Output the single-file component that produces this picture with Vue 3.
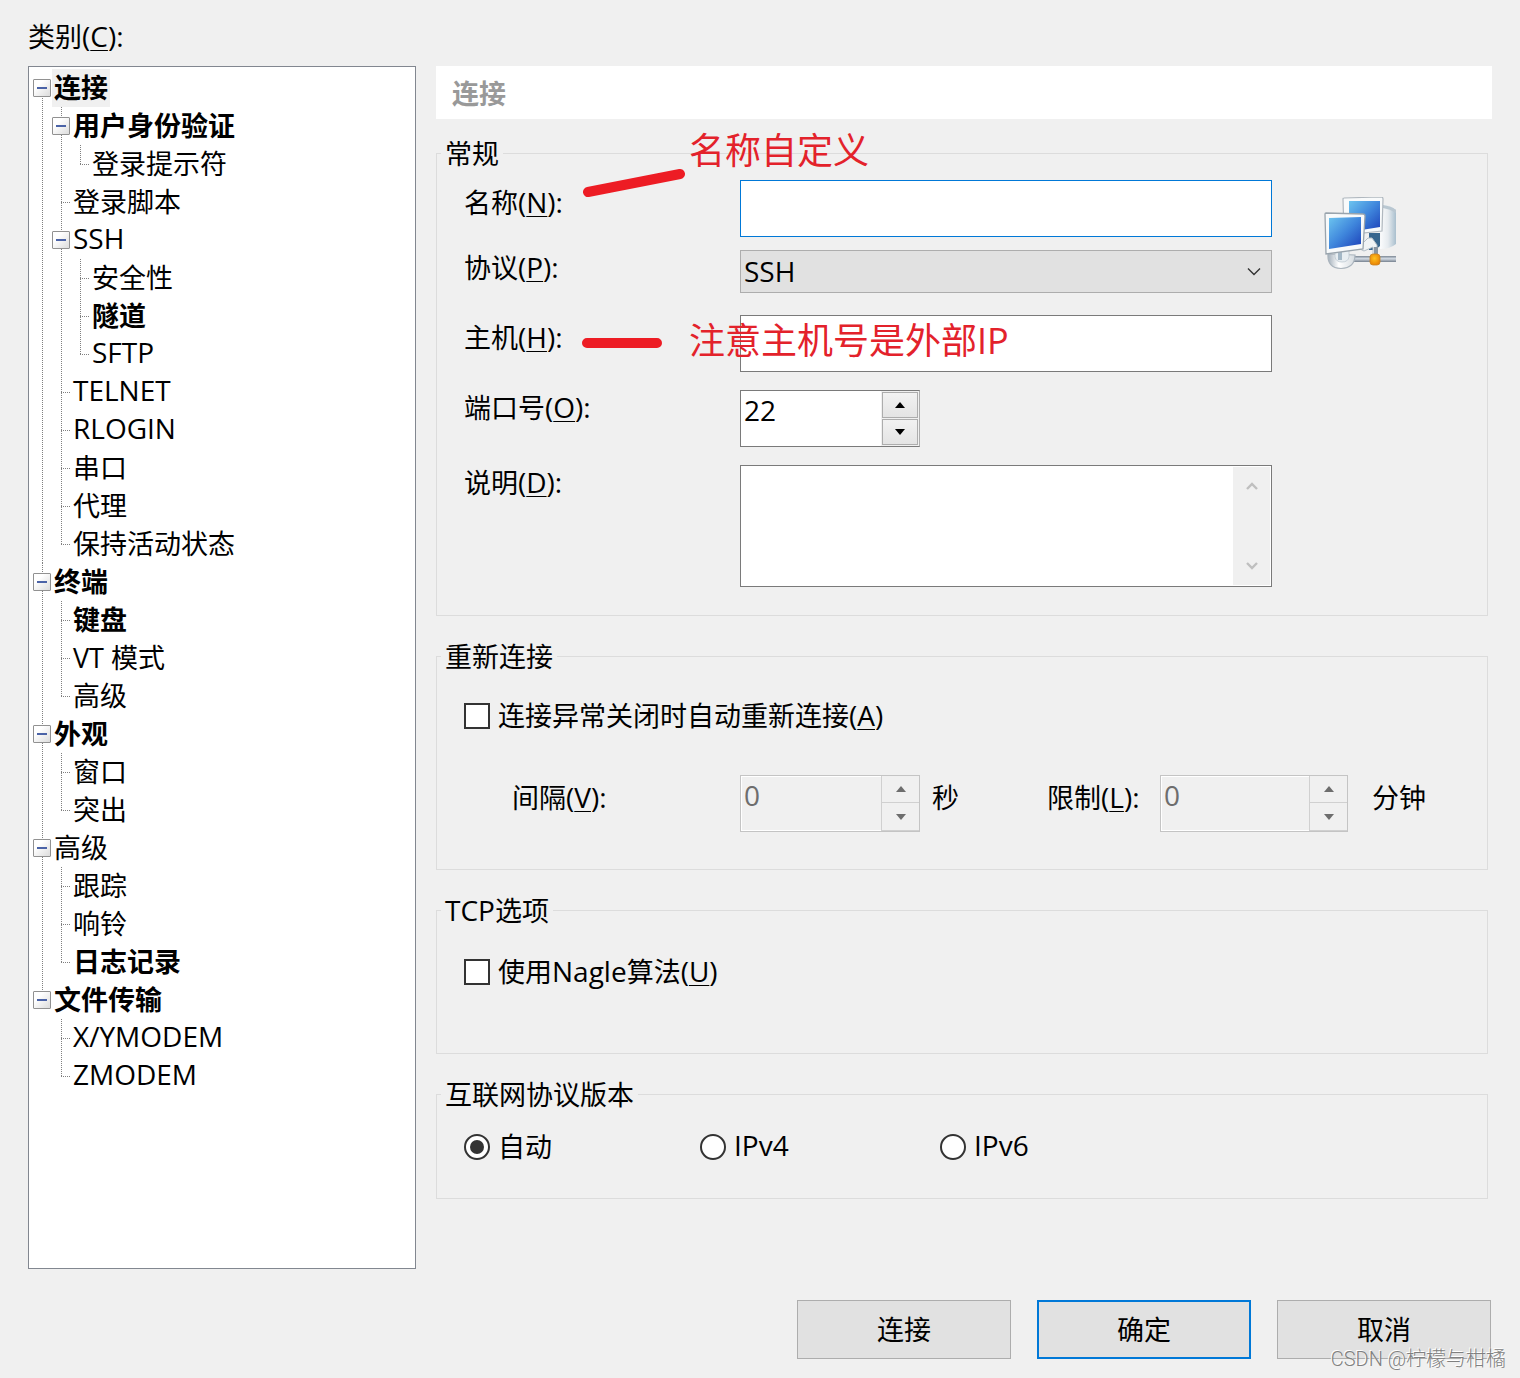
<script setup>
import { reactive, ref } from 'vue'

const tree = reactive([
  {
    name: '连接', bold: true, open: true, selected: true,
    children: [
      { name: '用户身份验证', bold: true, open: true, children: [{ name: '登录提示符' }] },
      { name: '登录脚本' },
      {
        name: 'SSH', latin: true, open: true,
        children: [{ name: '安全性' }, { name: '隧道', bold: true }, { name: 'SFTP', latin: true }],
      },
      { name: 'TELNET', latin: true },
      { name: 'RLOGIN', latin: true },
      { name: '串口' },
      { name: '代理' },
      { name: '保持活动状态' },
    ],
  },
  {
    name: '终端', bold: true, open: true,
    children: [{ name: '键盘', bold: true }, { name: 'VT 模式' }, { name: '高级' }],
  },
  { name: '外观', bold: true, open: true, children: [{ name: '窗口' }, { name: '突出' }] },
  {
    name: '高级', open: true,
    children: [{ name: '跟踪' }, { name: '响铃' }, { name: '日志记录', bold: true }],
  },
  {
    name: '文件传输', bold: true, open: true,
    children: [{ name: 'X/YMODEM', latin: true }, { name: 'ZMODEM', latin: true }],
  },
])

const hostName = ref('')
const protocol = ref('SSH')
const host = ref('')
const port = ref('22')
const description = ref('')
const reconnect = ref(false)
const interval = ref('0')
const limit = ref('0')
const nagle = ref(false)
const ipVersion = ref('auto')

function stepPort(delta) {
  port.value = String(Math.max(0, Number(port.value) + delta))
}
</script>

<template>
  <div class="dialog">
    <div id="category-label" class="category">类别<span class="key">(<u>C</u>):</span></div>

    <div class="main">
      <nav class="tree" aria-labelledby="category-label">
        <ul class="root">
          <li v-for="a in tree" :key="a.name">
            <div class="node">
              <button class="toggle" type="button" :aria-label="a.name" @click="a.open = !a.open"></button>
              <span class="name" :class="{ bold: a.bold, latin: a.latin, selected: a.selected }">{{ a.name }}</span>
            </div>
            <ul v-if="a.open">
              <li v-for="b in a.children" :key="b.name">
                <div class="node">
                  <button v-if="b.children" class="toggle" type="button" :aria-label="b.name" @click="b.open = !b.open"></button>
                  <span v-else class="stub"></span>
                  <span class="name" :class="{ bold: b.bold, latin: b.latin }">{{ b.name }}</span>
                </div>
                <ul v-if="b.open">
                  <li v-for="c in b.children" :key="c.name">
                    <div class="node">
                      <span class="stub"></span>
                      <span class="name" :class="{ bold: c.bold, latin: c.latin }">{{ c.name }}</span>
                    </div>
                  </li>
                </ul>
              </li>
            </ul>
          </li>
        </ul>
      </nav>

      <div class="panel">
        <h1 class="title">连接</h1>

        <div class="groups">
          <div class="annotated">
            <fieldset>
              <legend>常规</legend>
              <div class="general">
                <div class="form">
                  <div class="field">
                    <label class="low" for="name">名称<span class="key">(<u>N</u>):</span></label>
                    <input id="name" v-model="hostName" class="box focused" type="text" />
                  </div>
                  <div class="field protocol">
                    <label for="protocol">协议<span class="key">(<u>P</u>):</span></label>
                    <div class="combo">
                      <select id="protocol" v-model="protocol">
                        <option>SSH</option>
                        <option>SFTP</option>
                        <option>TELNET</option>
                        <option>RLOGIN</option>
                      </select>
                      <svg width="14" height="9" viewBox="0 0 14 9" aria-hidden="true">
                        <path d="M1 1.5 7 7.5 13 1.5" fill="none" stroke="#333" stroke-width="1.4" />
                      </svg>
                    </div>
                  </div>
                  <div class="field host">
                    <label class="low" for="host">主机<span class="key">(<u>H</u>):</span></label>
                    <input id="host" v-model="host" class="box" type="text" />
                  </div>
                  <div class="field">
                    <label for="port">端口号<span class="key">(<u>O</u>):</span></label>
                    <div class="spin">
                      <input id="port" v-model="port" type="text" />
                      <div class="arrows">
                        <button type="button" aria-label="+" @click="stepPort(1)">
                          <svg width="10" height="6" viewBox="0 0 10 6"><path d="M0 6 5 0 10 6z" /></svg>
                        </button>
                        <button type="button" aria-label="-" @click="stepPort(-1)">
                          <svg width="10" height="6" viewBox="0 0 10 6"><path d="M0 0 5 6 10 0z" /></svg>
                        </button>
                      </div>
                    </div>
                  </div>
                  <div class="field">
                    <label for="description">说明<span class="key">(<u>D</u>):</span></label>
                    <div class="memo">
                      <textarea id="description" v-model="description"></textarea>
                      <div class="scroll" aria-hidden="true">
                        <svg width="12" height="9" viewBox="0 0 12 9"><path d="M1 8 6 3 11 8" /></svg>
                        <svg width="12" height="9" viewBox="0 0 12 9"><path d="M1 1 6 6 11 1" /></svg>
                      </div>
                    </div>
                  </div>
                </div>

                <svg class="computers" width="74" height="74" viewBox="0 0 74 74" aria-hidden="true">
                  <defs>
                    <linearGradient id="screen" x1="0" y1="0" x2="1" y2="1">
                      <stop offset="0" stop-color="#6cc4ef" />
                      <stop offset="0.5" stop-color="#3f86dc" />
                      <stop offset="1" stop-color="#1b3fb8" />
                    </linearGradient>
                    <linearGradient id="tower" x1="0" y1="0" x2="1" y2="0">
                      <stop offset="0" stop-color="#fbfcfd" />
                      <stop offset="0.5" stop-color="#e6ebef" />
                      <stop offset="1" stop-color="#a9bfce" />
                    </linearGradient>
                    <linearGradient id="pipe" x1="0" y1="0" x2="0" y2="1">
                      <stop offset="0" stop-color="#7c8794" />
                      <stop offset="0.45" stop-color="#d3dbe4" />
                      <stop offset="1" stop-color="#76818f" />
                    </linearGradient>
                    <linearGradient id="base" x1="0" y1="0" x2="1" y2="0">
                      <stop offset="0" stop-color="#a3afba" />
                      <stop offset="0.4" stop-color="#fff" />
                      <stop offset="1" stop-color="#d5dbe0" />
                    </linearGradient>
                    <radialGradient id="joint" cx="0.45" cy="0.4" r="0.7">
                      <stop offset="0" stop-color="#ffc21f" />
                      <stop offset="1" stop-color="#e57a00" />
                    </radialGradient>
                  </defs>
                  <path d="M57 7Q66 8 72 13V47Q66 52 56 52z" fill="url(#tower)" />
                  <path d="M59 8Q67 9 72 13V16Q66 12 59 11z" fill="#b9c7d1" />
                  <path d="M45 36H56V49L51 53H45z" fill="#38668e" />
                  <path d="M34 51 44 41H48L53 48V59H49V50L40 54z" fill="#f0f3f5" stroke="#b4bec6" stroke-width="1" />
                  <path d="M19 2Q19 1 20 1L57 0Q59 0 59 2L58 34 20 38z" fill="#f8fafb" stroke="#b0b8bf" stroke-width="1.2" />
                  <path d="M25 4H56V30L25 35z" fill="url(#screen)" />
                  <path d="M28 59H72V65H28z" fill="url(#pipe)" />
                  <path d="M50 50H54V60H50z" fill="#8995a1" />
                  <path d="M4 57Q3 71 17 71.5 31 71 31 58z" fill="url(#base)" stroke="#aab4bd" stroke-width="1.2" />
                  <path d="M11 53H25V60Q24 65 18 65 12 65 11 60z" fill="#e8eef2" stroke="#bdc8d0" stroke-width="0.8" />
                  <path d="M14 53H18V63H14z" fill="#a3b7c6" />
                  <path d="M1 17Q1 16 2 16L39 17Q41 17 41 19L39 52 2 57z" fill="#f8fafb" stroke="#99a4ad" stroke-width="1.3" />
                  <path d="M5 21 37 20 37 47 5 52z" fill="url(#screen)" />
                  <rect x="46" y="57" width="10" height="11" rx="3" fill="url(#joint)" stroke="#c98422" stroke-width="0.8" />
                </svg>
              </div>
            </fieldset>

            <svg class="strokes" width="120" height="200" viewBox="0 0 120 200" aria-hidden="true">
              <path d="M12 22 104 4M11 173H81" fill="none" stroke="#ed1c24" stroke-width="10" stroke-linecap="round" />
            </svg>
            <span class="note note-name">名称自定义</span>
            <span class="note note-host">注意主机号是外部IP</span>
          </div>

          <fieldset>
            <legend>重新连接</legend>
            <div class="reconnect">
              <label class="choice">
                <input v-model="reconnect" type="checkbox" />
                <span>连接异常关闭时自动重新连接<span class="key">(<u>A</u>)</span></span>
              </label>
              <div class="timing">
                <label class="interval" for="interval">间隔<span class="key">(<u>V</u>):</span></label>
                <div class="spin off">
                  <input id="interval" v-model="interval" type="text" disabled />
                  <div class="arrows">
                    <button type="button" aria-label="+" disabled>
                      <svg width="10" height="6" viewBox="0 0 10 6"><path d="M0 6 5 0 10 6z" /></svg>
                    </button>
                    <button type="button" aria-label="-" disabled>
                      <svg width="10" height="6" viewBox="0 0 10 6"><path d="M0 0 5 6 10 0z" /></svg>
                    </button>
                  </div>
                </div>
                <span class="seconds">秒</span>
                <label class="limit" for="limit">限制<span class="key">(<u>L</u>):</span></label>
                <div class="spin off wide">
                  <input id="limit" v-model="limit" type="text" disabled />
                  <div class="arrows">
                    <button type="button" aria-label="+" disabled>
                      <svg width="10" height="6" viewBox="0 0 10 6"><path d="M0 6 5 0 10 6z" /></svg>
                    </button>
                    <button type="button" aria-label="-" disabled>
                      <svg width="10" height="6" viewBox="0 0 10 6"><path d="M0 0 5 6 10 0z" /></svg>
                    </button>
                  </div>
                </div>
                <span class="minutes">分钟</span>
              </div>
            </div>
          </fieldset>

          <fieldset>
            <legend><span class="key">TCP</span>选项</legend>
            <div class="tcp">
              <label class="choice">
                <input v-model="nagle" type="checkbox" />
                <span>使用<span class="key">Nagle</span>算法<span class="key">(<u>U</u>)</span></span>
              </label>
            </div>
          </fieldset>

          <fieldset>
            <legend>互联网协议版本</legend>
            <div class="versions">
              <label class="choice">
                <input v-model="ipVersion" type="radio" name="ip" value="auto" />
                <span>自动</span>
              </label>
              <label class="choice">
                <input v-model="ipVersion" type="radio" name="ip" value="4" />
                <span class="latin">IPv4</span>
              </label>
              <label class="choice">
                <input v-model="ipVersion" type="radio" name="ip" value="6" />
                <span class="latin">IPv6</span>
              </label>
            </div>
          </fieldset>
        </div>
      </div>
    </div>

    <div class="footer">
      <button type="button">连接</button>
      <button type="button" class="default">确定</button>
      <button type="button">取消</button>
    </div>

    <span class="watermark">CSDN @柠檬与柑橘</span>
  </div>
</template>

<style>
body {
  background: #f0f0f0;
}
</style>

<style scoped>
.dialog,
.dialog * {
  box-sizing: border-box;
}

.dialog {
  position: relative;
  padding: 18px 28px 19px;
  background: #f0f0f0;
  color: #000;
  font: 27px/38px "Open Sans", "Noto Sans CJK SC", sans-serif;
  white-space: nowrap;
}

input,
select,
textarea,
button {
  margin: 0;
  padding: 0;
  border: 0;
  border-radius: 0;
  outline: 0;
  color: inherit;
  font: inherit;
}

u {
  text-decoration-thickness: 1px;
  text-underline-offset: 3px;
}

.key,
.latin {
  font-size: 28px;
}

.key {
  line-height: 28px;
}

.category {
  margin-bottom: 10px;
}

.main {
  display: flex;
  gap: 20px;
}

/* category tree */
.tree {
  flex: none;
  width: 388px;
  padding: 2px 4px;
  border: 1px solid #828790;
  background: #fff;
}

.tree ul {
  margin: 0;
  padding: 0;
  list-style: none;
}

.tree ul ul {
  margin-left: 19px;
}

.tree li {
  background: repeating-linear-gradient(#808080 0 1px, transparent 1px 2px) 9px 0 / 1px 100% no-repeat;
}

.tree li:last-child {
  background-size: 1px 19px;
}

.root > li:first-child {
  background-position: 9px 19px;
}

.node {
  display: flex;
  align-items: center;
  height: 38px;
  background: repeating-linear-gradient(90deg, #808080 0 1px, transparent 1px 2px) 9px 19px / 10px 1px no-repeat;
}

.toggle {
  display: flex;
  align-items: center;
  justify-content: center;
  width: 18px;
  height: 18px;
  margin-right: 1px;
  border: 1px solid #919191;
  border-radius: 1px;
  background: linear-gradient(135deg, #fff 30%, #dcdcdc);
}

.toggle::before {
  content: "";
  width: 10px;
  height: 2px;
  background: #4b63a7;
}

.stub {
  width: 18px;
  margin-right: 1px;
}

.name {
  padding: 0 2px;
}

.latin {
  padding-bottom: 4px;
}

.bold {
  font-weight: 700;
}

.selected {
  background: #f0f0f0;
}

/* settings panel */
.panel {
  flex: 1;
  min-width: 0;
  padding-bottom: 70px;
}

.title {
  margin: 0 0 16px;
  padding: 9px 16px 6px;
  background: #fff;
  color: #999;
  font-size: 27px;
  font-weight: 700;
  line-height: 38px;
}

.groups {
  display: flex;
  flex-direction: column;
  gap: 22px;
  margin-right: 4px;
}

.annotated {
  position: relative;
}

fieldset {
  min-width: 0;
  margin: 0;
  padding: 0 0 0 4px;
  border: 1px solid #dcdcdc;
}

legend {
  height: 36px;
  padding: 0 4px;
}

.general {
  display: flex;
  align-items: flex-start;
  padding: 9px 0 28px 23px;
}

.form {
  display: flex;
  flex: 1;
  flex-direction: column;
  gap: 18px;
}

.field {
  display: flex;
  align-items: flex-start;
}

.field > label {
  flex: none;
  width: 276px;
  line-height: 36px;
}

.field > .low {
  padding-top: 5px;
}

.protocol {
  margin-top: -5px;
}

.host {
  margin-top: 4px;
}

.box {
  flex: 1;
  min-width: 0;
  height: 57px;
  padding: 0 4px;
  border: 1px solid #7a7a7a;
  background: #fff;
}

.focused {
  border-color: #0078d7;
}

.combo {
  position: relative;
  flex: 1;
}

.combo select {
  display: block;
  width: 100%;
  height: 43px;
  padding: 0 3px 2px;
  border: 1px solid #adadad;
  background: #e1e1e1;
  font-size: 28px;
  appearance: none;
}

.combo svg {
  position: absolute;
  top: 17px;
  right: 11px;
  pointer-events: none;
}

.spin {
  display: flex;
  flex: none;
  width: 180px;
  height: 57px;
  border: 1px solid #7a7a7a;
  border-right-color: #adadad;
  background: #fff;
}

.spin.wide {
  width: 188px;
}

.spin input {
  flex: 1;
  min-width: 0;
  padding: 0 3px 18px;
  background: #fff;
  font-size: 28px;
}

.arrows {
  display: flex;
  flex-direction: column;
  gap: 1px;
  width: 38px;
  padding: 1px;
  background: #f0f0f0;
}

.arrows button {
  display: flex;
  flex: 1;
  align-items: center;
  justify-content: center;
  border: 1px solid #adadad;
  background: linear-gradient(#f2f2f2, #e4e4e4);
}

.spin.off {
  border-color: #c4c4c4;
}

.off,
.off input,
.off button {
  background: #f0f0f0;
  color: #6d6d6d;
}

.off input {
  padding: 0 2px 18px;
  border: 1px solid #fff;
  border-right: 0;
}

.off .arrows {
  padding: 0;
  border-left: 1px solid #d0d0d0;
}

.off .arrows button {
  border-color: #d0d0d0;
  border-width: 0 0 1px;
  background: #f0f0f0;
  fill: #6d6d6d;
}

.memo {
  display: flex;
  flex: 1;
  height: 122px;
  padding: 1px;
  border: 1px solid #7a7a7a;
  background: #fff;
}

.memo textarea {
  flex: 1;
  min-width: 0;
  resize: none;
}

.scroll {
  display: flex;
  flex-direction: column;
  align-items: center;
  justify-content: space-between;
  width: 37px;
  padding: 14px 0;
  background: #f0f0f0;
}

.scroll path {
  fill: none;
  stroke: #bfbfbf;
  stroke-width: 2.4;
}

.computers {
  flex: none;
  margin: 17px 89px 0 52px;
}

.reconnect {
  padding: 23px 0 37px 23px;
}

.choice {
  display: flex;
  align-items: center;
  gap: 8px;
}

.choice input {
  display: grid;
  flex: none;
  place-items: center;
  width: 26px;
  height: 26px;
  border: 2px solid #333;
  background: #fff;
  appearance: none;
}

.choice input[type="radio"] {
  border-radius: 50%;
}

.choice input:checked::before {
  content: "";
  width: 14px;
  height: 14px;
  background: #333;
}

.choice input[type="radio"]:checked::before {
  border-radius: 50%;
}

.timing {
  display: flex;
  align-items: flex-start;
  margin-top: 40px;
}

.timing > label,
.timing > span {
  padding-top: 4px;
}

.interval {
  width: 276px;
  padding-left: 48px;
}

.seconds {
  width: 127px;
  padding-left: 12px;
}

.limit {
  width: 113px;
}

.minutes {
  padding-left: 24px;
}

.tcp {
  padding: 25px 0 62px 23px;
}

.versions {
  display: grid;
  grid-template-columns: 236px 240px auto;
  grid-auto-rows: 38px;
  padding: 16px 0 32px 23px;
}

/* red remarks over the form */
.strokes,
.note {
  position: absolute;
  pointer-events: none;
}

.strokes {
  top: 35px;
  left: 140px;
  overflow: visible;
}

.note {
  left: 253px;
  color: #e3222b;
  font-size: 36px;
  line-height: 48px;
}

.note-name {
  top: -8px;
}

.note-host {
  top: 182px;
}

.footer {
  display: flex;
  justify-content: flex-end;
  gap: 26px;
  margin: 31px 1px 0 0;
}

.footer button {
  width: 214px;
  height: 59px;
  border: 1px solid #adadad;
  background: #e1e1e1;
}

.footer .default {
  border: 2px solid #0078d7;
}

.watermark {
  position: absolute;
  right: 14px;
  bottom: 6px;
  color: #808080;
  font: 300 20px/26px Roboto, "Noto Sans CJK SC", sans-serif;
  text-shadow: -1px -1px 0 #fff;
}
</style>
